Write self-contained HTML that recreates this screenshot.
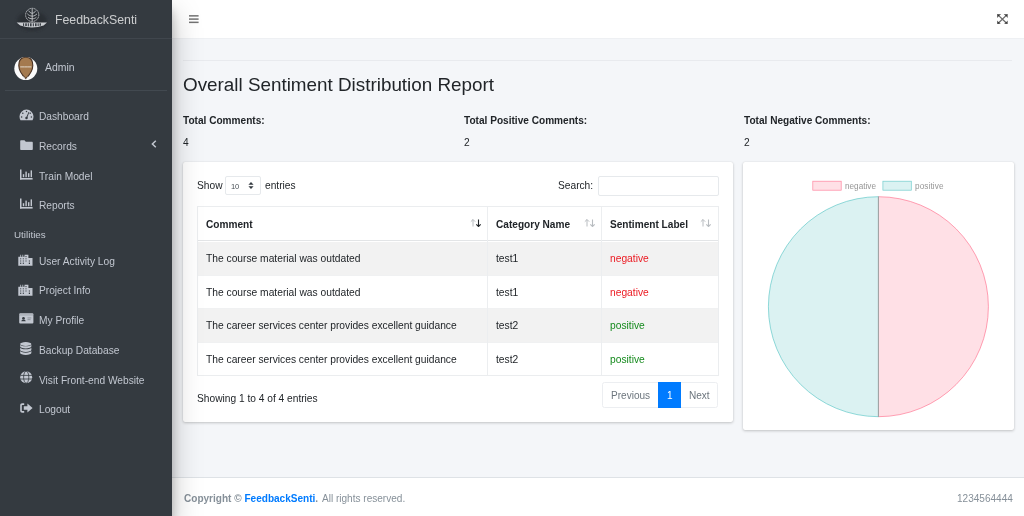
<!DOCTYPE html>
<html><head><meta charset="utf-8"><title>Overall Sentiment Distribution Report</title>
<style>
html,body{margin:0;padding:0}
body{width:1024px;height:516px;overflow:hidden;position:relative;background:#f4f6f9;font-family:"Liberation Sans",sans-serif}
.t{position:absolute;white-space:nowrap;line-height:1;-webkit-font-smoothing:antialiased;will-change:transform}
.r{position:absolute;display:block}
</style></head><body>
<div class="r" style="left:0px;top:0px;width:172.00px;height:516.00px;background:#343a40;box-shadow:0 14px 28px rgba(0,0,0,.25),0 10px 10px rgba(0,0,0,.22);z-index:5"></div>
<div style="position:absolute;left:0;top:0;width:172px;height:516px;z-index:6">
<svg class="r" style="left:14px;top:5px" width="36" height="28" viewBox="0 0 36 28">
<defs><filter id="bl" x="-50%" y="-50%" width="200%" height="200%"><feGaussianBlur stdDeviation="1.6"/></filter></defs>
<ellipse cx="18" cy="16" rx="15" ry="10" fill="#23272b" opacity=".55" filter="url(#bl)"/>
<g fill="none" stroke="#cdd0d3" stroke-width=".85">
<circle cx="18.2" cy="9.9" r="6.6" stroke-dasharray="1.3 .5"/>
<path d="M18.2 3.6v12.6"/>
<path d="M18.2 8.3c-1.5-.2-2.8-1.2-3.6-2.6M18.2 8.3c1.5-.2 2.8-1.2 3.6-2.6M18.2 11.2c-2-.2-3.6-1-4.8-2.4M18.2 11.2c2-.2 3.6-1 4.8-2.4M18.2 13.8c-1.6 0-3.2-.6-4.2-1.6M18.2 13.8c1.6 0 3.2-.6 4.2-1.6"/>
</g>
<path d="M2.6 17.6L33 17.6 29.6 20.6Q18 24.6 6.2 20.6Z" fill="#c9ccd0"/>
<g fill="#3a3f45"><rect x="9" y="18.3" width="1.1" height="2.6"/><rect x="11.2" y="18.3" width="1.6" height="2.8"/><rect x="13.8" y="18.3" width="1.1" height="3"/><rect x="16" y="18.3" width="1.6" height="3"/><rect x="18.8" y="18.3" width="1.1" height="3"/><rect x="21" y="18.3" width="1.6" height="2.9"/><rect x="23.6" y="18.3" width="1.1" height="2.7"/><rect x="25.6" y="18.3" width="1.4" height="2.4"/></g>
</svg>
<div class="t" style="left:55.10px;top:14.09px;font-size:12.3px;color:rgba(255,255,255,.74);font-weight:400;">FeedbackSenti</div>
<div class="r" style="left:0px;top:38.2px;width:172.00px;height:1.00px;background:#40464d"></div>
<svg class="r" style="left:14px;top:56.5px" width="24" height="24" viewBox="0 0 24 24">
<defs><clipPath id="cc"><circle cx="11.8" cy="11.6" r="11.5"/></clipPath></defs>
<circle cx="11.8" cy="11.6" r="11.5" fill="#fbfbfb"/>
<g clip-path="url(#cc)">
<path d="M11.8 0.2C16.6 0.2 18.8 3.6 18.8 8.4C18.8 13.8 14.6 18.8 11.8 21.6C9 18.8 4.8 13.8 4.8 8.4C4.8 3.6 7 0.2 11.8 0.2Z" fill="#a47a4f" stroke="#4a3324" stroke-width="1.1"/>
<path d="M6.2 9.9h4.2M13.2 9.9h4.2M10.4 9.9h2.8" stroke="#e9e4da" stroke-width=".9"/>
<path d="M9.6 19.5l2.2 4 2.2-4" fill="none" stroke="#e8e8e8" stroke-width=".8"/>
</g>
</svg>
<div class="t" style="left:44.80px;top:63.35px;font-size:10.45px;color:#c2c7d0;font-weight:400;">Admin</div>
<div class="r" style="left:5px;top:90px;width:162.00px;height:1.00px;background:#424950"></div>
<svg class="r" style="left:18.5px;top:109.0px" width="15" height="12" viewBox="0 0 15 12"><path d="M7.5 0.6A7 7 0 0 0 0.5 7.6c0 1.3.35 2.5 1 3.6h12c.65-1.1 1-2.3 1-3.6A7 7 0 0 0 7.5.6z" fill="#c2c7d0"/><g fill="#343a40"><circle cx="7.5" cy="2.6" r=".75"/><circle cx="3.8" cy="4.2" r=".75"/><circle cx="2.6" cy="8" r=".75"/><circle cx="12.4" cy="8" r=".75"/><circle cx="11.2" cy="4.2" r=".75"/><circle cx="7.5" cy="9.1" r="1.25"/><path d="M7 9l2.5-6 .8.3-2.3 6z"/></g></svg><div class="t" style="left:39.10px;top:112.36px;font-size:10.2px;color:#c2c7d0;font-weight:400;">Dashboard</div>
<svg class="r" style="left:19.5px;top:139.5px" width="13" height="10" viewBox="0 0 13 10"><path d="M0.2 1.2c0-.6.4-1 1-1h3.3l1.3 1.6h6c.6 0 1 .4 1 1v6.2c0 .6-.4 1-1 1H1.2c-.6 0-1-.4-1-1z" fill="#c2c7d0"/></svg><div class="t" style="left:39.10px;top:142.16px;font-size:10.2px;color:#c2c7d0;font-weight:400;">Records</div>
<svg class="r" style="left:19.6px;top:168.7px" width="13" height="11" viewBox="0 0 13 11"><g fill="#c2c7d0"><rect x="0" y="0.5" width="1.5" height="10"/><rect x="0" y="9" width="12.6" height="1.6"/><rect x="2.8" y="5.2" width="1.4" height="3"/><rect x="5.4" y="2.6" width="1.4" height="5.6"/><rect x="8" y="4.2" width="1.4" height="4"/><rect x="10.6" y="1.4" width="1.4" height="6.8"/></g></svg><div class="t" style="left:39.10px;top:171.86px;font-size:10.2px;color:#c2c7d0;font-weight:400;">Train Model</div>
<svg class="r" style="left:19.6px;top:198.1px" width="13" height="11" viewBox="0 0 13 11"><g fill="#c2c7d0"><rect x="0" y="0.5" width="1.5" height="10"/><rect x="0" y="9" width="12.6" height="1.6"/><rect x="2.8" y="5.2" width="1.4" height="3"/><rect x="5.4" y="2.6" width="1.4" height="5.6"/><rect x="8" y="4.2" width="1.4" height="4"/><rect x="10.6" y="1.4" width="1.4" height="6.8"/></g></svg><div class="t" style="left:39.10px;top:201.26px;font-size:10.2px;color:#c2c7d0;font-weight:400;">Reports</div>
<svg class="r" style="left:18px;top:254.0px" width="15" height="12" viewBox="0 0 15 12"><g fill="#c2c7d0"><path d="M0.3 2.8h2v-2h.8v2h1.3v-2h.8v2h1.3V0.7h3.9V4h4.1v7.8H.3z"/></g><g fill="#343a40"><rect x="2.2" y="4.3" width="1" height="1"/><rect x="4.8" y="4.3" width="1" height="1"/><rect x="7.5" y="2" width="1" height="1.1"/><rect x="7.5" y="4.3" width="1" height="1"/><rect x="2.2" y="6.5" width="1" height="1"/><rect x="4.8" y="6.5" width="1" height="1"/><rect x="7.5" y="6.5" width="1" height="1"/><rect x="10.8" y="6.5" width="1.2" height="1"/><rect x="2.2" y="8.6" width="1" height="1.4"/><rect x="4.8" y="8.6" width="1" height="1.4"/><rect x="10.8" y="8.6" width="1.2" height="1.4"/></g></svg><div class="t" style="left:39.10px;top:256.76px;font-size:10.2px;color:#c2c7d0;font-weight:400;">User Activity Log</div>
<svg class="r" style="left:18px;top:283.7px" width="15" height="12" viewBox="0 0 15 12"><g fill="#c2c7d0"><path d="M0.3 2.8h2v-2h.8v2h1.3v-2h.8v2h1.3V0.7h3.9V4h4.1v7.8H.3z"/></g><g fill="#343a40"><rect x="2.2" y="4.3" width="1" height="1"/><rect x="4.8" y="4.3" width="1" height="1"/><rect x="7.5" y="2" width="1" height="1.1"/><rect x="7.5" y="4.3" width="1" height="1"/><rect x="2.2" y="6.5" width="1" height="1"/><rect x="4.8" y="6.5" width="1" height="1"/><rect x="7.5" y="6.5" width="1" height="1"/><rect x="10.8" y="6.5" width="1.2" height="1"/><rect x="2.2" y="8.6" width="1" height="1.4"/><rect x="4.8" y="8.6" width="1" height="1.4"/><rect x="10.8" y="8.6" width="1.2" height="1.4"/></g></svg><div class="t" style="left:39.10px;top:286.46px;font-size:10.2px;color:#c2c7d0;font-weight:400;">Project Info</div>
<svg class="r" style="left:18.8px;top:313.2px" width="15" height="11" viewBox="0 0 15 11"><rect x="0.2" y="0.2" width="14.2" height="10.4" rx="1" fill="#c2c7d0"/><rect x="0.2" y="1.6" width="14.2" height=".7" fill="#343a40" opacity=".35"/><g fill="#343a40"><circle cx="4.5" cy="5.2" r="1.3"/><path d="M2.3 8.3c.2-1.2 1.1-1.7 2.2-1.7s2 .5 2.2 1.7z"/><rect x="8.5" y="4.6" width="3.8" height=".7" opacity=".5"/><rect x="8.5" y="6.4" width="3" height=".7" opacity=".5"/></g></svg><div class="t" style="left:39.10px;top:316.16px;font-size:10.2px;color:#c2c7d0;font-weight:400;">My Profile</div>
<svg class="r" style="left:20.4px;top:342.0px" width="12" height="13" viewBox="0 0 12 13"><g fill="#c2c7d0"><ellipse cx="5.75" cy="2" rx="5.6" ry="1.9"/><path d="M0.15 2.4v2.2c0 1 2.5 1.9 5.6 1.9s5.6-.9 5.6-1.9V2.4c0 1-2.5 1.9-5.6 1.9S.15 3.4.15 2.4z"/><path d="M0.15 5.4v2.6c0 1 2.5 1.9 5.6 1.9s5.6-.9 5.6-1.9V5.4c0 1-2.5 1.9-5.6 1.9S.15 6.4.15 5.4z"/><path d="M0.15 8.8v2.2c0 1 2.5 1.9 5.6 1.9s5.6-.9 5.6-1.9V8.8c0 1-2.5 1.9-5.6 1.9S.15 9.8.15 8.8z"/></g></svg><div class="t" style="left:39.10px;top:345.86px;font-size:10.2px;color:#c2c7d0;font-weight:400;">Backup Database</div>
<svg class="r" style="left:19.7px;top:371.4px" width="13" height="13" viewBox="0 0 13 13"><circle cx="6.2" cy="6.2" r="6" fill="#c2c7d0"/><g fill="none" stroke="#343a40" stroke-width=".8"><ellipse cx="6.2" cy="6.2" rx="2.6" ry="6"/><path d="M.3 4.4h11.8M.3 8h11.8"/></g></svg><div class="t" style="left:39.10px;top:375.56px;font-size:10.2px;color:#c2c7d0;font-weight:400;">Visit Front-end Website</div>
<svg class="r" style="left:19.5px;top:402.9px" width="13" height="10" viewBox="0 0 13 10"><g fill="#c2c7d0"><path d="M4.2 0.2H2.2C1 .2.2 1 .2 2.2v5.6c0 1.2.8 2 2 2h2V8.1h-1.8c-.4 0-.6-.3-.6-.6V2.5c0-.4.2-.6.6-.6h1.8z"/><path d="M3.8 3.3h3.6V.6L12.6 5 7.4 9.4V6.7H3.8z"/></g></svg><div class="t" style="left:39.10px;top:405.26px;font-size:10.2px;color:#c2c7d0;font-weight:400;">Logout</div>
<div class="t" style="left:14.00px;top:229.96px;font-size:9.85px;color:#c2c7d0;font-weight:400;">Utilities</div>
<svg class="r" style="left:150.5px;top:140.3px" width="6" height="8" viewBox="0 0 6 8"><path d="M4.8 .8L1.4 4l3.4 3.2" fill="none" stroke="#c2c7d0" stroke-width="1.5"/></svg>
</div>
<div class="r" style="left:172px;top:0px;width:852.00px;height:38.00px;background:#fff"></div>
<div class="r" style="left:172px;top:38px;width:852.00px;height:1.00px;background:#eef0f3"></div>
<svg class="r" style="left:189px;top:14.5px" width="10" height="9" viewBox="0 0 10 9"><g fill="rgba(0,0,0,.55)"><rect x="0" y="0.1" width="9.6" height="1.5"/><rect x="0" y="3.35" width="9.6" height="1.5"/><rect x="0" y="6.6" width="9.6" height="1.5"/></g></svg>
<svg class="r" style="left:996.8px;top:13.6px" width="11" height="10.4" viewBox="0 0 11 10.4"><g fill="rgba(0,0,0,.58)"><path d="M0 0h4.2L0 4z"/><path d="M10.8 0v4L6.6 0z"/><path d="M0 10.4V6.4l4.2 4z"/><path d="M10.8 10.4H6.6l4.2-4z"/></g><path d="M1.2 1.1l8.4 8.2M9.6 1.1l-8.4 8.2" stroke="rgba(0,0,0,.58)" stroke-width="1.3"/></svg>
<div class="r" style="left:183px;top:60px;width:829.00px;height:1.00px;background:#e8eaee"></div>
<div class="t" style="left:183.00px;top:76.24px;font-size:18.85px;color:#212529;font-weight:400;">Overall Sentiment Distribution Report</div>
<div class="t" style="left:183.00px;top:116.05px;font-size:10.1px;color:#212529;font-weight:700;">Total Comments:</div>
<div class="t" style="left:463.60px;top:116.05px;font-size:10.1px;color:#212529;font-weight:700;">Total Positive Comments:</div>
<div class="t" style="left:743.60px;top:116.05px;font-size:10.1px;color:#212529;font-weight:700;">Total Negative Comments:</div>
<div class="t" style="left:183.00px;top:138.26px;font-size:10.2px;color:#212529;font-weight:400;">4</div>
<div class="t" style="left:463.60px;top:138.26px;font-size:10.2px;color:#212529;font-weight:400;">2</div>
<div class="t" style="left:743.60px;top:138.26px;font-size:10.2px;color:#212529;font-weight:400;">2</div>
<div class="r" style="left:183.2px;top:161.9px;width:549.80px;height:259.80px;background:#fff;border-radius:2px;box-shadow:0 0 1px rgba(0,0,0,.125),0 1px 3px rgba(0,0,0,.2)"></div>
<div class="r" style="left:742.7px;top:161.9px;width:270.90px;height:268.60px;background:#fff;border-radius:2px;box-shadow:0 0 1px rgba(0,0,0,.125),0 1px 3px rgba(0,0,0,.2)"></div>
<div class="t" style="left:196.80px;top:180.76px;font-size:10.2px;color:#212529;font-weight:400;">Show</div>
<div class="r" style="left:224.8px;top:175.5px;width:36.50px;height:19.80px;border:1px solid #e6e9ec;border-radius:2px;box-sizing:border-box;background:#fff"></div>
<div class="t" style="left:231.40px;top:182.77px;font-size:7.6px;color:#495057;font-weight:400;letter-spacing:-.3px">10</div>
<svg class="r" style="left:247.8px;top:182.3px" width="6" height="7" viewBox="0 0 6 7"><path d="M3 0L5.6 2.8H.4zM3 7L5.6 4.2H.4z" fill="#343a40"/></svg>
<div class="t" style="left:264.70px;top:180.76px;font-size:10.2px;color:#212529;font-weight:400;">entries</div>
<div class="t" style="right:430.80px;top:180.76px;font-size:10.2px;color:#212529;font-weight:400;">Search:</div>
<div class="r" style="left:597.8px;top:175.5px;width:121.00px;height:20.30px;border:1px solid #e6e9ec;border-radius:2px;box-sizing:border-box;background:#fff"></div>
<div class="r" style="left:196.5px;top:206.2px;width:522.90px;height:169.50px;border:1px solid #ebedef;box-sizing:border-box"></div>
<div class="r" style="left:197.5px;top:241.6px;width:520.90px;height:33.50px;background:#f2f2f2"></div>
<div class="r" style="left:197.5px;top:308.6px;width:520.90px;height:33.50px;background:#f2f2f2"></div>
<div class="r" style="left:197.5px;top:239.8px;width:520.90px;height:1.60px;background:#e3e5e7"></div>
<div class="r" style="left:197.5px;top:274.6px;width:520.90px;height:1.00px;background:#f0f1f2"></div>
<div class="r" style="left:197.5px;top:308.1px;width:520.90px;height:1.00px;background:#f0f1f2"></div>
<div class="r" style="left:197.5px;top:341.6px;width:520.90px;height:1.00px;background:#f0f1f2"></div>
<div class="r" style="left:486.9px;top:207.2px;width:1.00px;height:167.50px;background:#eceef0"></div>
<div class="r" style="left:601.4px;top:207.2px;width:1.00px;height:167.50px;background:#eceef0"></div>
<div class="t" style="left:205.60px;top:220.05px;font-size:10.1px;color:#212529;font-weight:700;">Comment</div>
<div class="t" style="left:496.30px;top:220.05px;font-size:10.1px;color:#212529;font-weight:700;">Category Name</div>
<div class="t" style="left:609.80px;top:220.05px;font-size:10.1px;color:#212529;font-weight:700;">Sentiment Label</div>
<svg class="r" style="left:470.2px;top:218.8px" width="12" height="8" viewBox="0 0 12 8"><path d="M3 .5v7M.8 2.7L3 .5l2.2 2.2" fill="none" stroke="#b8bcc0" stroke-width="1"/><path d="M8.5 .5v7M6.3 5.3L8.5 7.5l2.2-2.2" fill="none" stroke="#212529" stroke-width="1.1"/></svg>
<svg class="r" style="left:584.2px;top:218.8px" width="12" height="8" viewBox="0 0 12 8"><path d="M3 .5v7M.8 2.7L3 .5l2.2 2.2" fill="none" stroke="#b8bcc0" stroke-width="1"/><path d="M8.5 .5v7M6.3 5.3L8.5 7.5l2.2-2.2" fill="none" stroke="#b8bcc0" stroke-width="1.1"/></svg>
<svg class="r" style="left:700.2px;top:218.8px" width="12" height="8" viewBox="0 0 12 8"><path d="M3 .5v7M.8 2.7L3 .5l2.2 2.2" fill="none" stroke="#b8bcc0" stroke-width="1"/><path d="M8.5 .5v7M6.3 5.3L8.5 7.5l2.2-2.2" fill="none" stroke="#b8bcc0" stroke-width="1.1"/></svg>
<div class="t" style="left:205.80px;top:254.12px;font-size:10.25px;color:#212529;font-weight:400;">The course material was outdated</div>
<div class="t" style="left:496.30px;top:254.12px;font-size:10.25px;color:#212529;font-weight:400;">test1</div>
<div class="t" style="left:609.80px;top:254.12px;font-size:10.25px;color:#ec1a22;font-weight:400;">negative</div>
<div class="t" style="left:205.80px;top:287.62px;font-size:10.25px;color:#212529;font-weight:400;">The course material was outdated</div>
<div class="t" style="left:496.30px;top:287.62px;font-size:10.25px;color:#212529;font-weight:400;">test1</div>
<div class="t" style="left:609.80px;top:287.62px;font-size:10.25px;color:#ec1a22;font-weight:400;">negative</div>
<div class="t" style="left:205.80px;top:321.12px;font-size:10.25px;color:#212529;font-weight:400;">The career services center provides excellent guidance</div>
<div class="t" style="left:496.30px;top:321.12px;font-size:10.25px;color:#212529;font-weight:400;">test2</div>
<div class="t" style="left:609.80px;top:321.12px;font-size:10.25px;color:#158a1d;font-weight:400;">positive</div>
<div class="t" style="left:205.80px;top:354.62px;font-size:10.25px;color:#212529;font-weight:400;">The career services center provides excellent guidance</div>
<div class="t" style="left:496.30px;top:354.62px;font-size:10.25px;color:#212529;font-weight:400;">test2</div>
<div class="t" style="left:609.80px;top:354.62px;font-size:10.25px;color:#158a1d;font-weight:400;">positive</div>
<div class="t" style="left:196.60px;top:393.86px;font-size:10.2px;color:#212529;font-weight:400;">Showing 1 to 4 of 4 entries</div>
<div class="r" style="left:601.9px;top:381.7px;width:116.50px;height:25.90px;border:1px solid #eceef1;border-radius:2.5px;box-sizing:border-box;background:#fff"></div>
<div class="r" style="left:658.2px;top:381.7px;width:22.60px;height:25.90px;background:#007bff"></div>
<div class="t" style="left:610.50px;top:391.39px;font-size:10.05px;color:#6c757d;font-weight:400;">Previous</div>
<div class="t" style="left:666.60px;top:391.39px;font-size:10.05px;color:#fff;font-weight:400;">1</div>
<div class="t" style="left:689.00px;top:391.39px;font-size:10.05px;color:#6c757d;font-weight:400;">Next</div>
<svg class="r" style="left:742.6px;top:161.3px" width="271" height="269" viewBox="742.6 161.3 271 269">
<rect x="812.4" y="181.5" width="28.4" height="9" fill="rgba(255,99,132,.2)" stroke="rgba(255,99,132,.75)" stroke-width=".7"/>
<rect x="882.5" y="181.5" width="28.4" height="9" fill="rgba(75,192,192,.2)" stroke="rgba(75,192,192,.75)" stroke-width=".7"/>
<path d="M878 307V197A110 110 0 0 1 878 417z" fill="rgba(255,99,132,.2)" stroke="rgba(255,99,132,.85)" stroke-width=".7"/>
<path d="M878 307V417A110 110 0 0 1 878 197z" fill="rgba(75,192,192,.2)" stroke="rgba(75,192,192,.85)" stroke-width=".7"/>
<path d="M878.1 197V417" stroke="#a3a3a3" stroke-width=".9"/>
</svg>
<div class="t" style="left:845.00px;top:182.76px;font-size:8.2px;color:#969696;font-weight:400;">negative</div>
<div class="t" style="left:914.80px;top:182.76px;font-size:8.2px;color:#969696;font-weight:400;letter-spacing:.1px">positive</div>
<div class="r" style="left:172px;top:476.5px;width:852.00px;height:39.50px;background:#fff;border-top:1px solid #dee2e6;box-sizing:border-box"></div>
<div class="t" style="left:183.70px;top:493.59px;font-size:10.05px;color:#869099;font-weight:700;">Copyright © <span style="color:#007bff">FeedbackSenti</span>.</div>
<div class="t" style="left:321.50px;top:493.59px;font-size:10.05px;color:#869099;font-weight:400;">All rights reserved.</div>
<div class="t" style="right:11.50px;top:493.59px;font-size:10.05px;color:#869099;font-weight:400;">1234564444</div>
</body></html>
